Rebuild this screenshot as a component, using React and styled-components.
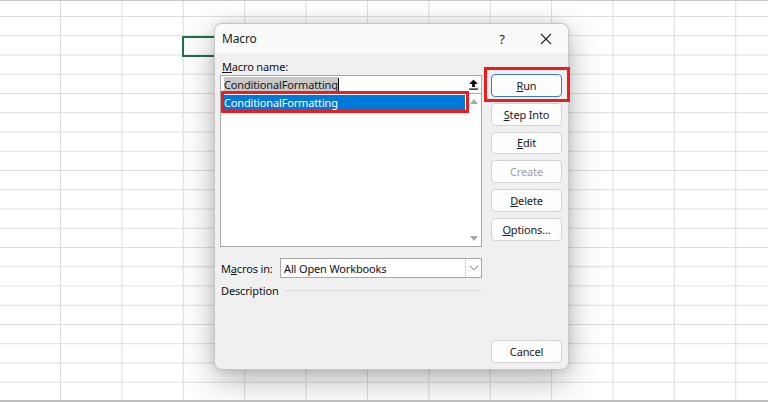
import React from 'react';
import styled, { createGlobalStyle } from 'styled-components';

const GlobalStyle = createGlobalStyle`
  html, body {
    margin: 0;
    padding: 0;
  }
  body {
    font-family: "Noto Sans", "Liberation Sans", sans-serif;
    color: #111;
    letter-spacing: -0.15px;
  }
  * {
    box-sizing: border-box;
  }
`;

const Sheet = styled.div`
  position: relative;
  width: 768px;
  height: 402px;
  overflow: hidden;
  padding: 22px 0 0 214px;
  background-color: #fff;
  background-image:
    linear-gradient(to right, #dcdcdc 1px, transparent 1px),
    linear-gradient(to bottom, #dcdcdc 1px, transparent 1px);
  background-size: 61.4px 100%, 100% 19.25px;
  background-position: 60px 0, 0 15px;
  border-top: 1px solid #c8c8c8;
  border-bottom: 2px solid #bdbdbd;
`;

const ActiveCell = styled.div`
  position: absolute;
  left: 182px;
  top: 35px;
  width: 40px;
  height: 21px;
  border: 2px solid #1e7145;
`;

const Dialog = styled.div`
  position: relative;
  z-index: 1;
  width: 355px;
  height: 347px;
  display: flex;
  flex-direction: column;
  background: #f0f0f0;
  border: 1px solid #c6c6c6;
  border-radius: 8px;
  box-shadow: 0 10px 32px rgba(0, 0, 0, 0.3), 0 0 8px rgba(0, 0, 0, 0.1);
`;

const TitleBar = styled.div`
  height: 29px;
  display: flex;
  align-items: center;
  padding-left: 7px;
  background: #fafafa;
  border-radius: 8px 8px 0 0;
`;

const Title = styled.span`
  flex: 1;
  font-size: 12px;
  color: #1b1b1b;
`;

const TitleButton = styled.div`
  width: 44px;
  height: 29px;
  display: flex;
  align-items: center;
  justify-content: center;
  font-size: 13px;
  color: #1b1b1b;
`;

const Body = styled.div`
  flex: 1;
  display: flex;
  padding: 6px 6px 6px 5px;
`;

const LeftCol = styled.div`
  width: 262px;
  display: flex;
  flex-direction: column;
`;

const RightCol = styled.div`
  width: 71px;
  margin-left: 9px;
  padding-top: 15px;
  display: flex;
  flex-direction: column;
  gap: 6px;
`;

const Label = styled.div`
  height: 16px;
  line-height: 16px;
  font-size: 11px;
  padding-left: 2px;
  white-space: nowrap;
`;

const TextBox = styled.div`
  height: 19px;
  display: flex;
  align-items: center;
  padding-left: 3px;
  background: #fff;
  border: 1px solid #a8a8a8;
`;

const SelectedText = styled.span`
  height: 15px;
  line-height: 15px;
  font-size: 11px;
  background: #c8c8c8;
  color: #1a1a1a;
`;

const Caret = styled.span`
  width: 1px;
  height: 14px;
  background: #000;
`;

const UploadButton = styled.div`
  margin-left: auto;
  width: 16px;
  height: 17px;
  display: flex;
  align-items: center;
  justify-content: center;
`;

const ListBox = styled.div`
  position: relative;
  height: 154px;
  margin-top: -1px;
  display: flex;
  background: #fff;
  border: 1px solid #a8a8a8;
`;

const ListItems = styled.div`
  flex: 1;
  padding: 1px;
`;

const ListItem = styled.div`
  height: 15px;
  line-height: 15px;
  padding-left: 2px;
  font-size: 11px;
  color: #fff;
  background: #0078d7;
`;

const ScrollBar = styled.div`
  width: 15px;
  display: flex;
  flex-direction: column;
  align-items: center;
  justify-content: space-between;
  padding: 5px 0 5px;
`;

const Highlight = styled.div`
  position: absolute;
  left: ${p => p.$left}px;
  top: ${p => p.$top}px;
  right: ${p => (p.$right === undefined ? 'auto' : `${p.$right}px`)};
  bottom: ${p => (p.$bottom === undefined ? 'auto' : `${p.$bottom}px`)};
  width: ${p => (p.$width ? `${p.$width}px` : 'auto')};
  height: ${p => (p.$height ? `${p.$height}px` : 'auto')};
  border: 3px solid #ee1c1c;
  pointer-events: none;
`;

const Row = styled.div`
  display: flex;
  align-items: center;
  margin-top: ${p => p.$gap}px;
  height: ${p => p.$height}px;
`;

const RowLabel = styled.div`
  width: ${p => (p.$auto ? 'auto' : '60px')};
  padding-left: 1px;
  font-size: 11px;
  white-space: nowrap;
`;

const ComboBox = styled.div`
  flex: 1;
  height: 20px;
  display: flex;
  align-items: center;
  background: #fff;
  border: 1px solid #a8a8a8;
`;

const ComboText = styled.span`
  flex: 1;
  padding-left: 3px;
  font-size: 11px;
`;

const ComboArrow = styled.div`
  width: 16px;
  height: 18px;
  display: flex;
  align-items: center;
  justify-content: center;
  border-left: 1px solid #dadada;
`;

const Rule = styled.div`
  flex: 1;
  height: 1px;
  margin-left: 6px;
  background: #d6d6d6;
`;

const ButtonSlot = styled.div`
  position: relative;
  margin-top: ${p => (p.$bottom ? 'auto' : '0')};
`;

const Button = styled.div`
  height: 22.8px;
  display: flex;
  align-items: center;
  justify-content: center;
  font-size: 11px;
  color: ${p => (p.$disabled ? '#a2a2a2' : '#1a1a1a')};
  background: #fdfdfd;
  border: 1px solid ${p => (p.$primary ? '#3b7dc4' : '#d2d2d2')};
  border-radius: 4px;
`;

const CloseIcon = () => (
  <svg width="12" height="12" viewBox="0 0 12 12">
    <path d="M1 1 L11 11 M11 1 L1 11" stroke="#222" strokeWidth="1.1" fill="none" />
  </svg>
);

const UploadIcon = () => (
  <svg width="11" height="11" viewBox="0 0 10 10">
    <path d="M5 0.5 L9 4.5 L6.3 4.5 L6.3 7.3 L3.7 7.3 L3.7 4.5 L1 4.5 Z" fill="#111" />
    <rect x="1" y="8.6" width="8" height="1.2" fill="#111" />
  </svg>
);

const Triangle = ({ up }) => (
  <svg width="8" height="5" viewBox="0 0 8 5">
    <path d={up ? 'M0 5 L4 0 L8 5 Z' : 'M0 0 L8 0 L4 5 Z'} fill="#a6a6a6" />
  </svg>
);

const Chevron = () => (
  <svg width="10" height="6" viewBox="0 0 10 6">
    <path d="M1 0.8 L5 4.8 L9 0.8" stroke="#6a6a6a" strokeWidth="1" fill="none" />
  </svg>
);

const buttons = [
  { key: 'R', rest: 'un', primary: true },
  { key: 'S', rest: 'tep Into' },
  { key: 'E', rest: 'dit' },
  { label: 'Create', disabled: true },
  { key: 'D', rest: 'elete' },
  { key: 'O', rest: 'ptions...' },
];

const App = () => {
  return (
    <>
      <GlobalStyle />
      <Sheet>
        <ActiveCell />
        <Dialog>
          <TitleBar>
            <Title>Macro</Title>
            <TitleButton>?</TitleButton>
            <TitleButton>
              <CloseIcon />
            </TitleButton>
          </TitleBar>
          <Body>
            <LeftCol>
              <Label>
                <u>M</u>acro name:
              </Label>
              <TextBox>
                <SelectedText>ConditionalFormatting</SelectedText>
                <Caret />
                <UploadButton>
                  <UploadIcon />
                </UploadButton>
              </TextBox>
              <ListBox>
                <ListItems>
                  <ListItem>ConditionalFormatting</ListItem>
                </ListItems>
                <ScrollBar>
                  <Triangle up />
                  <Triangle />
                </ScrollBar>
                <Highlight $left={0} $top={-3} $width={248} $height={22} />
              </ListBox>
              <Row $gap={11} $height={20}>
                <RowLabel>
                  M<u>a</u>cros in:
                </RowLabel>
                <ComboBox>
                  <ComboText>All Open Workbooks</ComboText>
                  <ComboArrow>
                    <Chevron />
                  </ComboArrow>
                </ComboBox>
              </Row>
              <Row $gap={4} $height={16}>
                <RowLabel $auto>Description</RowLabel>
                <Rule />
              </Row>
            </LeftCol>
            <RightCol>
              {buttons.map((b, i) => (
                <ButtonSlot key={i}>
                  <Button $primary={b.primary} $disabled={b.disabled}>
                    {b.label ? (
                      b.label
                    ) : (
                      <span>
                        <u>{b.key}</u>
                        {b.rest}
                      </span>
                    )}
                  </Button>
                  {b.primary && <Highlight $left={-7} $top={-7} $right={-8} $bottom={-5} />}
                </ButtonSlot>
              ))}
              <ButtonSlot $bottom>
                <Button>Cancel</Button>
              </ButtonSlot>
            </RightCol>
          </Body>
        </Dialog>
      </Sheet>
    </>
  );
};

export default App;
